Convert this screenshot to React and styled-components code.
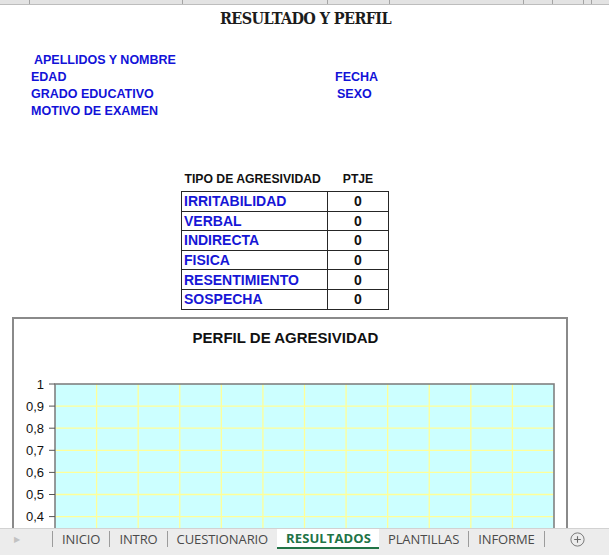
import React from 'react'
import styled, { createGlobalStyle } from 'styled-components'

const GlobalStyle = createGlobalStyle`
  html, body {
    margin: 0;
    padding: 0;
    background: #ffffff;
    overflow: hidden;
  }

  body {
    font-family: "Liberation Sans", Arial, sans-serif;
  }
`

const Window = styled.div`
  width: 609px;
  height: 555px;
  display: flex;
  flex-direction: column;
  overflow: hidden;
`

const ColumnStrip = styled.div`
  display: flex;
  flex-shrink: 0;
  height: 4px;
  background: #e3e3e3;
  border-bottom: 1px solid #bdbdbd;
`

const ColumnCell = styled.div`
  width: ${p => p.$w}px;
  flex-shrink: 0;
  box-sizing: border-box;
  border-right: 1px solid #a4a4a4;
`

const Sheet = styled.div`
  flex: 1;
  min-height: 0;
  overflow: hidden;
  display: flex;
  flex-direction: column;
`

const Title = styled.h1`
  margin: 4px 0 0;
  padding-left: 2px;
  text-align: center;
  font-family: "DejaVu Serif Condensed", "DejaVu Serif", "Liberation Serif", serif;
  font-stretch: condensed;
  font-size: 16px;
  line-height: 20px;
  font-weight: bold;
  color: #1c1c1c;
  letter-spacing: -0.6px;
`

const InfoGrid = styled.div`
  display: grid;
  grid-template-columns: 304px 1fr;
  grid-auto-rows: 17px;
  margin-top: 23px;
  padding-left: 31px;
`

const InfoLabel = styled.div`
  padding-left: ${p => p.$indent || 0}px;
  font-size: 12.5px;
  line-height: 17px;
  font-weight: bold;
  color: #1212d8;
`

const ScoreSection = styled.div`
  margin: 51px 0 0 181px;
`

const ScoreTable = styled.table`
  border-collapse: collapse;
  width: 208px;
`

const HeadCell = styled.th`
  padding: 0 0 4px ${p => (p.$center ? 0 : 3)}px;
  text-align: ${p => (p.$center ? 'center' : 'left')};
  font-size: 12.2px;
  line-height: 16px;
  font-weight: bold;
  color: #111111;
`

const NameCell = styled.td`
  width: 143px;
  height: 18.6px;
  padding: 0 0 0 2px;
  border: 1px solid #262626;
  font-size: 14px;
  line-height: 18px;
  font-weight: bold;
  color: #1616d6;
  white-space: nowrap;
`

const ScoreCell = styled.td`
  height: 18.6px;
  padding: 0;
  border: 1px solid #262626;
  text-align: center;
  font-size: 14px;
  line-height: 18px;
  font-weight: bold;
  color: #111111;
`

const ChartFrame = styled.div`
  flex-shrink: 0;
  width: 556px;
  margin: 7px 0 0 12px;
  box-sizing: border-box;
  border: 2px solid #8a8a8a;
  border-bottom: none;
  padding-top: 10px;
`

const ChartTitle = styled.div`
  padding-right: 9px;
  text-align: center;
  font-size: 15px;
  line-height: 18px;
  font-weight: bold;
  color: #111111;
`

const ChartSvg = styled.svg`
  display: block;
  margin-top: 27px;
`

const TabBar = styled.div`
  flex-shrink: 0;
  height: 27px;
  box-sizing: border-box;
  border-top: 1px solid #d2d2d2;
  background: #ececec;
  display: flex;
  align-items: flex-start;
  font-family: "Open Sans", "Noto Sans", sans-serif;
`

const NavArrow = styled.div`
  width: 52px;
  height: 19px;
  padding-left: 14px;
  box-sizing: border-box;
  display: flex;
  align-items: center;
  color: #c2c2c2;
  font-size: 8px;
  line-height: 10px;
`

const Divider = styled.div`
  width: 1px;
  height: 16px;
  margin-top: 2px;
  background: #9c9c9c;
`

const Tab = styled.div`
  height: ${p => (p.$active ? 20 : 19)}px;
  box-sizing: border-box;
  padding: 0 ${p => (p.$active ? 8 : 9)}px 0 ${p => (p.$active ? 9 : 9)}px;
  display: flex;
  align-items: center;
  font-size: 13px;
  font-weight: ${p => (p.$active ? 'bold' : 'normal')};
  letter-spacing: ${p => (p.$active ? '0.1px' : '-0.1px')};
  color: ${p => (p.$active ? '#217346' : '#4a4a4a')};
  background: ${p => (p.$active ? '#ffffff' : 'transparent')};
  border-bottom: ${p => (p.$active ? '2px solid #217346' : 'none')};
`

const AddButton = styled.div`
  margin: 3px 24px 0 auto;
  width: 15px;
  height: 15px;
  display: flex;
  align-items: center;
  justify-content: center;
`

const columns = [30, 153, 145, 62, 134, 29, 31, 8]

const scores = [
  { name: 'IRRITABILIDAD', value: 0 },
  { name: 'VERBAL', value: 0 },
  { name: 'INDIRECTA', value: 0 },
  { name: 'FISICA', value: 0 },
  { name: 'RESENTIMIENTO', value: 0 },
  { name: 'SOSPECHA', value: 0 },
]

const tabs = ['INICIO', 'INTRO', 'CUESTIONARIO', 'RESULTADOS', 'PLANTILLAS', 'INFORME']
const activeTab = 'RESULTADOS'

function ProfileChart() {
  const left = 41
  const right = 540
  const top = 10
  const step = 22.1
  const bottom = top + step * 10
  const colWidth = (right - left) / 12
  const ticks = Array.from({ length: 11 }, (_, i) => i)

  return (
    <ChartSvg width="552" height="260" viewBox="0 0 552 260">
      <rect x={left} y={top} width={right - left} height={bottom - top} fill="#ccffff" />
      {ticks.slice(1, 10).map(i => (
        <line key={'h' + i} x1={left} x2={right} y1={top + step * i} y2={top + step * i} stroke="#ffff99" strokeWidth="1.3" />
      ))}
      {Array.from({ length: 11 }, (_, i) => i + 1).map(i => (
        <line key={'v' + i} x1={left + colWidth * i} x2={left + colWidth * i} y1={top} y2={bottom} stroke="#ffff99" strokeWidth="1.3" />
      ))}
      <rect x={left} y={top} width={right - left} height={bottom - top} fill="none" stroke="#808080" strokeWidth="1.6" />
      {ticks.map(i => {
        const y = top + step * i
        const value = (10 - i) / 10
        const label = value === 1 ? '1' : value === 0 ? '0' : String(value).replace('.', ',')
        return (
          <g key={'t' + i}>
            <line x1={left - 6} x2={left} y1={y} y2={y} stroke="#555" strokeWidth="1" />
            <text x="30" y={y + 4.5} textAnchor="end" fontFamily="Liberation Sans, Arial, sans-serif" fontSize="13" fill="#111">
              {label}
            </text>
          </g>
        )
      })}
    </ChartSvg>
  )
}

export default function App() {
  const activeIndex = tabs.indexOf(activeTab)

  return (
    <Window>
      <GlobalStyle />

      <ColumnStrip>
        {columns.map((w, i) => <ColumnCell key={i} $w={w} />)}
      </ColumnStrip>

      <Sheet>
        <Title>RESULTADO Y PERFIL</Title>

        <InfoGrid>
          <InfoLabel $indent={3}>APELLIDOS Y NOMBRE</InfoLabel>
          <div />
          <InfoLabel>EDAD</InfoLabel>
          <InfoLabel>FECHA</InfoLabel>
          <InfoLabel>GRADO EDUCATIVO</InfoLabel>
          <InfoLabel $indent={2}>SEXO</InfoLabel>
          <InfoLabel>MOTIVO DE EXAMEN</InfoLabel>
          <div />
        </InfoGrid>

        <ScoreSection>
          <ScoreTable>
            <thead>
              <tr>
                <HeadCell>TIPO DE AGRESIVIDAD</HeadCell>
                <HeadCell $center>PTJE</HeadCell>
              </tr>
            </thead>
            <tbody>
              {scores.map(s => (
                <tr key={s.name}>
                  <NameCell>{s.name}</NameCell>
                  <ScoreCell>{s.value}</ScoreCell>
                </tr>
              ))}
            </tbody>
          </ScoreTable>
        </ScoreSection>

        <ChartFrame>
          <ChartTitle>PERFIL DE AGRESIVIDAD</ChartTitle>
          <ProfileChart />
        </ChartFrame>
      </Sheet>

      <TabBar>
        <NavArrow>▶</NavArrow>
        {tabs.map((t, i) => (
          <React.Fragment key={t}>
            {i !== activeIndex && i - 1 !== activeIndex && <Divider />}
            <Tab $active={i === activeIndex}>{t}</Tab>
          </React.Fragment>
        ))}
        <Divider />
        <AddButton>
          <svg width="15" height="15" viewBox="0 0 15 15">
            <circle cx="7.5" cy="7.5" r="6.6" fill="none" stroke="#7a7a7a" strokeWidth="1" />
            <path d="M7.5 4.2v6.6M4.2 7.5h6.6" stroke="#6a6a6a" strokeWidth="1.1" />
          </svg>
        </AddButton>
      </TabBar>
    </Window>
  )
}
